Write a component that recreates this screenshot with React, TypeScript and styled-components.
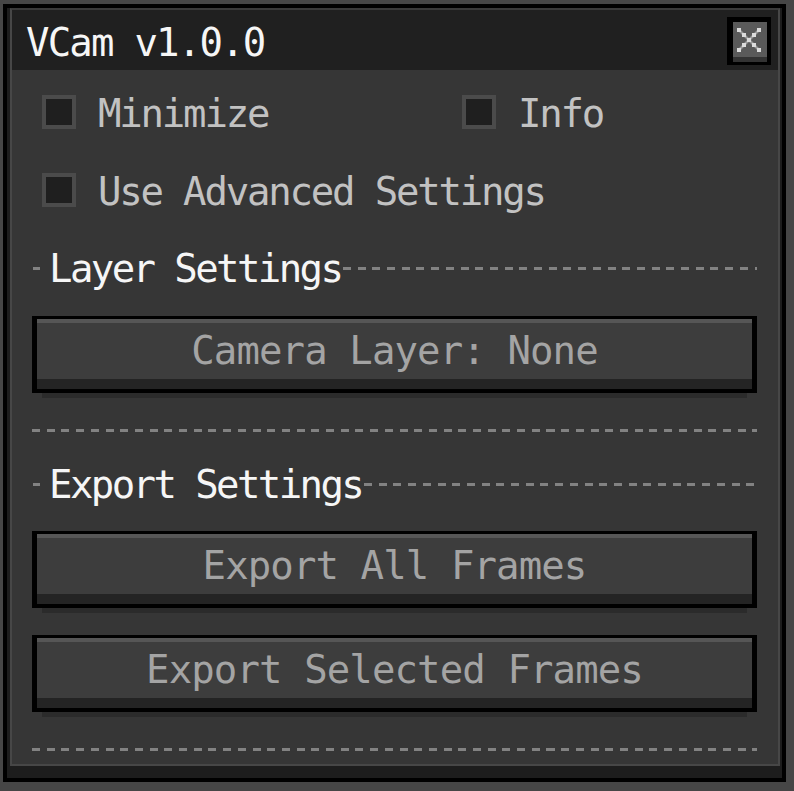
import styled, { createGlobalStyle } from 'styled-components'

const GlobalStyle = createGlobalStyle`
  html, body {
    margin: 0;
    background: #464646;
    overflow: hidden;
  }
`

const font = `'DejaVu Sans Mono', 'Liberation Mono', monospace`

type SectionProps = { title: string }

function Separator({ title }: SectionProps) {
  return (
    <SeparatorRow>
      <LeadDash />
      <SeparatorLabel>{title}</SeparatorLabel>
      <DashLine />
    </SeparatorRow>
  )
}

function CloseIcon() {
  const dots = [
    [6, 8], [26, 8], [11, 13], [21, 13], [16, 18], [11, 23], [21, 23], [6, 28], [26, 28],
  ]
  return (
    <svg width="34" height="36" viewBox="0 0 34 36">
      <path d="M6 8 L26 28 M26 8 L6 28" stroke="#9a9a9a" strokeWidth="2.5" />
      {dots.map(([x, y]) => (
        <rect key={`${x}-${y}`} x={x - 2} y={y - 2} width="4" height="4" fill="#dcdcdc" />
      ))}
    </svg>
  )
}

export default function App() {
  return (
    <Page>
      <GlobalStyle />
      <Window>
        <Frame>
          <TitleBar>
            <Title>VCam v1.0.0</Title>
            <CloseButton>
              <CloseFace>
                <CloseIcon />
              </CloseFace>
            </CloseButton>
          </TitleBar>
          <Body>
            <CheckRow $top={25}>
              <CheckItem $width={420}>
                <Checkbox />
                <CheckLabel>Minimize</CheckLabel>
              </CheckItem>
              <CheckItem>
                <Checkbox />
                <CheckLabel>Info</CheckLabel>
              </CheckItem>
            </CheckRow>
            <CheckRow $top={44}>
              <CheckItem>
                <Checkbox />
                <CheckLabel>Use Advanced Settings</CheckLabel>
              </CheckItem>
            </CheckRow>

            <Spaced $top={43}>
              <Separator title="Layer Settings" />
            </Spaced>
            <Button $top={30}>Camera Layer: None</Button>
            <FullDash $top={36} />

            <Spaced $top={34}>
              <Separator title="Export Settings" />
            </Spaced>
            <Button $top={29}>Export All Frames</Button>
            <Button $top={27}>Export Selected Frames</Button>
            <FullDash $top={36} />
          </Body>
        </Frame>
      </Window>
    </Page>
  )
}

const Page = styled.div`
  box-sizing: border-box;
  width: 794px;
  height: 791px;
  padding: 4px 8px 9px 3px;
`

const Window = styled.div`
  box-sizing: border-box;
  height: 100%;
  border: 4px solid #000;
  background: #1d1d1d;
  display: flex;
  flex-direction: column;
`

const Frame = styled.div`
  flex: 1;
  display: flex;
  flex-direction: column;
  margin: 0 2px 12px 3px;
  border: 2px solid #474747;
  border-top-color: #3a3a3a;
`

const TitleBar = styled.div`
  height: 60px;
  flex-shrink: 0;
  background: #202020;
  display: flex;
  align-items: flex-start;
  justify-content: space-between;
  padding: 0 7px 0 14px;
`

const Title = styled.div`
  font-family: ${font};
  font-size: 39px;
  letter-spacing: -1.8px;
  line-height: 1;
  color: #f6f6f6;
  margin-top: 13px;
`

const CloseButton = styled.div`
  margin-top: 7px;
  background: #000;
  padding: 5px 4px 3px 6px;
`

const CloseFace = styled.div`
  width: 34px;
  height: 40px;
  background: #5a5a5a;
  box-shadow: inset 0 -5px 0 #333;
  display: flex;
  align-items: flex-start;
  justify-content: center;
  svg {
    display: block;
  }
`

const Body = styled.div`
  flex: 1;
  background: #363636;
  padding: 0 21px 0 20px;
  display: flex;
  flex-direction: column;
`

const Spaced = styled.div<{ $top: number }>`
  margin-top: ${(p) => p.$top}px;
`

const CheckRow = styled.div<{ $top: number }>`
  margin-top: ${(p) => p.$top}px;
  padding-left: 10px;
  display: flex;
  height: 34px;
`

const CheckItem = styled.div<{ $width?: number }>`
  display: flex;
  align-items: center;
  gap: 22px;
  width: ${(p) => (p.$width ? `${p.$width}px` : 'auto')};
`

const Checkbox = styled.div`
  box-sizing: border-box;
  width: 34px;
  height: 34px;
  border: 4px solid #4b4b4b;
  background: #1f1f1f;
`

const CheckLabel = styled.span`
  font-family: ${font};
  font-size: 39px;
  letter-spacing: -2.2px;
  line-height: 1;
  color: #c2c2c2;
  margin-top: 2px;
`

const SeparatorRow = styled.div`
  height: 36px;
  display: flex;
  align-items: center;
`

const dashes = `repeating-linear-gradient(90deg, #828282 0 8px, transparent 8px 14.7px)`

const LeadDash = styled.div`
  width: 12px;
  height: 3px;
  padding-left: 1px;
  background: ${dashes};
  background-clip: content-box;
`

const SeparatorLabel = styled.span`
  font-family: ${font};
  font-size: 39px;
  letter-spacing: -2.6px;
  line-height: 1;
  color: #f6f6f6;
  padding: 0 2px 0 4px;
`

const DashLine = styled.div`
  flex: 1;
  height: 3px;
  background: ${dashes};
`

const FullDash = styled.div<{ $top: number }>`
  margin-top: ${(p) => p.$top}px;
  height: 3px;
  background: ${dashes};
`

const Button = styled.div<{ $top: number }>`
  margin-top: ${(p) => p.$top}px;
  box-sizing: border-box;
  height: 77px;
  border-style: solid;
  border-color: #000;
  border-width: 3px 5px 4px 5px;
  background: #3d3d3d;
  box-shadow: inset 0 4px 0 #565656, inset 0 -10px 0 #242424, 0 15px 0 -10px #2b2b2b;
  display: flex;
  align-items: center;
  justify-content: center;
  padding-bottom: 8px;
  font-family: ${font};
  font-size: 39px;
  letter-spacing: -0.9px;
  line-height: 1;
  color: #a4a4a4;
`
